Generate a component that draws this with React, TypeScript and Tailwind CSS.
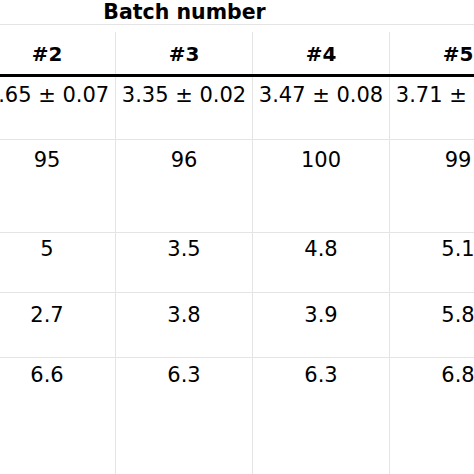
const cols = ['#2', '#3', '#4', '#5']

const rows: { values: string[]; height: string; pad: string }[] = [
  { values: ['3.65 ± 0.07', '3.35 ± 0.02', '3.47 ± 0.08', '3.71 ± 0.05'], height: 'h-[63px]', pad: 'pt-[6px]' },
  { values: ['95', '96', '100', '99'], height: 'h-[93px]', pad: 'pt-[8px]' },
  { values: ['5', '3.5', '4.8', '5.1'], height: 'h-[60px]', pad: 'pt-[4px]' },
  { values: ['2.7', '3.8', '3.9', '5.8'], height: 'h-[65px]', pad: 'pt-[10px]' },
  { values: ['6.6', '6.3', '6.3', '6.8'], height: 'h-[120px]', pad: 'pt-[5px]' },
]

export default function App() {
  return (
    <div className="w-[474px] h-[474px] overflow-hidden bg-white text-black font-['DejaVu_Sans',Verdana,sans-serif]">
      <div className="ml-[-21px] w-[548px]">
        {/* title row */}
        <div className="flex h-[25px] border-b border-[#e4e4e4]">
          <div className="w-[137px]" />
          <div className="w-[137px] flex justify-center">
            <span className="whitespace-nowrap font-bold text-[20.5px] leading-[24px]">Batch number</span>
          </div>
        </div>

        {/* column headers */}
        <div className="flex h-[49px]">
          {cols.map((c) => (
            <div key={c} className="w-[137px] pt-[7px]">
              <div className="h-full border-r border-[#e4e4e4] flex justify-center pt-[10px]">
                <span className="font-bold text-[20px] leading-[24px]">{c}</span>
              </div>
            </div>
          ))}
        </div>
        <div className="h-[3px] bg-black" />

        {rows.map((r, i) => (
          <div key={i} className={`flex ${r.height} ${i < rows.length - 1 ? 'border-b border-[#e4e4e4]' : ''}`}>
            {r.values.map((v, j) => (
              <div
                key={j}
                className={`w-[137px] border-r border-[#e4e4e4] flex justify-center ${r.pad}`}
              >
                <span className="whitespace-nowrap text-[21px] leading-[24px]">{v}</span>
              </div>
            ))}
          </div>
        ))}
      </div>
    </div>
  )
}
